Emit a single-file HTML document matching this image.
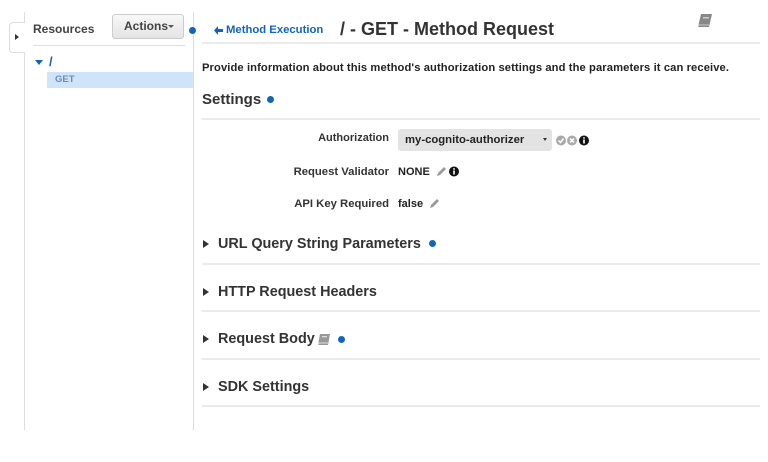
<!DOCTYPE html>
<html><head><meta charset="utf-8"><style>
*{margin:0;padding:0;box-sizing:border-box}
body{width:768px;height:462px;background:#fff;font-family:"Liberation Sans",sans-serif;color:#333;position:relative;overflow:hidden}
.a{position:absolute;white-space:nowrap}
.b{font-weight:bold}
.hl{position:absolute;height:2px;background:#eaeaea}
.dot{position:absolute;width:7px;height:7px;border-radius:50%;background:#1166bb}
.tri{position:absolute;width:0;height:0;border-top:4.5px solid transparent;border-bottom:4.5px solid transparent;border-left:6px solid #333}
.sec{font-size:14.4px;font-weight:bold;color:#333}
.lbl{font-size:11px;font-weight:bold;text-align:right;width:200px}
</style></head><body>
<div class="a" style="left:24px;top:12px;width:1px;height:418px;background:#ddd"></div>
<div class="a" style="left:193px;top:12px;width:1px;height:418px;background:#ddd"></div>
<div class="a" style="left:9px;top:22px;width:16px;height:31px;border:1px solid #ddd;border-right:none;border-radius:4px 0 0 4px;background:#fff"></div>
<div class="tri" style="left:15px;top:34px;border-left-width:4px;border-top-width:3.5px;border-bottom-width:3.5px"></div>
<div class="a b" style="left:33px;top:22px;font-size:12px;color:#444">Resources</div>
<div class="a" style="left:112px;top:14px;width:72px;height:25px;border:1px solid #ccc;border-radius:3px;background:linear-gradient(#f8f8f8,#e4e4e4)"></div>
<div class="a b" style="left:124px;top:19px;font-size:12px;color:#444">Actions</div>
<div class="a" style="left:168px;top:25px;border-left:3px solid transparent;border-right:3px solid transparent;border-top:3px solid #555"></div>
<div class="dot" style="left:189px;top:27px"></div>
<div class="hl" style="left:33px;top:45px;width:152px;height:1px;background:#ddd"></div>
<div class="a" style="left:35px;top:60px;border-left:4px solid transparent;border-right:4px solid transparent;border-top:5px solid #1166bb"></div>
<div class="a b" style="left:49px;top:54px;font-size:13px;color:#1166bb">/</div>
<div class="a" style="left:47px;top:72px;width:146px;height:16px;background:#cfe4f9"></div>
<div class="a b" style="left:55px;top:74px;font-size:9.5px;color:#6a8fb3">GET</div>

<svg class="a" style="left:213px;top:25px" width="11" height="11" viewBox="0 0 11 11"><path d="M5 1L1 5.5L5 10V7H10V4H5Z" fill="#1166bb"/></svg>
<div class="a b" style="left:226px;top:24px;font-size:11.3px;color:#1166bb">Method Execution</div>
<div class="a b" style="left:340px;top:19px;font-size:18px;color:#333">/ - GET - Method Request</div>
<svg class="a" style="left:697px;top:13px" width="17" height="16" viewBox="0 0 17 16"><path d="M4 1H15L12 14H1Z" fill="#888"/><path d="M1 14L2 12H12" stroke="#ccc" fill="none"/><rect x="6" y="4" width="6" height="1.5" fill="#ccc"/></svg>
<div class="hl" style="left:202px;top:42px;width:558px"></div>
<div class="a b" style="left:202px;top:62px;font-size:11.2px;letter-spacing:0.1px;color:#222">Provide information about this method's authorization settings and the parameters it can receive.</div>
<div class="a b" style="left:202px;top:91px;font-size:15px;color:#333">Settings</div>
<div class="dot" style="left:267px;top:96px"></div>
<div class="hl" style="left:202px;top:118px;width:558px"></div>

<div class="a lbl" style="left:189px;top:132px">Authorization</div>
<div class="a" style="left:398px;top:129px;width:154px;height:22px;background:#e3e3e3;border-radius:3px"></div>
<div class="a b" style="left:405px;top:134px;font-size:11.3px;color:#222">my-cognito-authorizer</div>
<div class="a" style="left:543px;top:138px;border-left:2.5px solid transparent;border-right:2.5px solid transparent;border-top:3.5px solid #333"></div>
<svg class="a" style="left:556px;top:135px" width="36" height="11" viewBox="0 0 36 11"><circle cx="5" cy="5.5" r="5" fill="#aaa"/><path d="M2.5 5.5L4.5 7.5L7.5 3.5" stroke="#fff" stroke-width="1.5" fill="none"/><circle cx="16" cy="5.5" r="5" fill="#aaa"/><path d="M14 3.5L18 7.5M18 3.5L14 7.5" stroke="#fff" stroke-width="1.5"/><circle cx="28" cy="5.5" r="5" fill="#111"/><rect x="27.2" y="4.5" width="1.6" height="4" fill="#fff"/><rect x="27.2" y="2.2" width="1.6" height="1.5" fill="#fff"/></svg>
<div class="a lbl" style="left:189px;top:166px;font-size:11.3px">Request Validator</div>
<div class="a b" style="left:398px;top:166px;font-size:11px;color:#222">NONE</div>
<svg class="a" style="left:436px;top:166px" width="24" height="11" viewBox="0 0 24 11"><path d="M1 10L2 7L8 1L10 3L4 9Z" fill="#999"/><circle cx="18" cy="5.5" r="5" fill="#111"/><rect x="17.2" y="4.5" width="1.6" height="4" fill="#fff"/><rect x="17.2" y="2.2" width="1.6" height="1.5" fill="#fff"/></svg>
<div class="a lbl" style="left:189px;top:198px;font-size:11.3px">API Key Required</div>
<div class="a b" style="left:398px;top:198px;font-size:11px;color:#222">false</div>
<svg class="a" style="left:429px;top:198px" width="12" height="11" viewBox="0 0 12 11"><path d="M1 10L2 7L8 1L10 3L4 9Z" fill="#999"/></svg>

<div class="tri" style="left:203px;top:240px"></div>
<div class="a sec" style="left:218px;top:236px">URL Query String Parameters</div>
<div class="dot" style="left:429px;top:240px"></div>
<div class="hl" style="left:202px;top:263px;width:558px"></div>
<div class="tri" style="left:203px;top:288px"></div>
<div class="a sec" style="left:218px;top:284px">HTTP Request Headers</div>
<div class="hl" style="left:202px;top:310px;width:558px"></div>
<div class="tri" style="left:203px;top:335px"></div>
<div class="a sec" style="left:218px;top:331px">Request Body</div>
<svg class="a" style="left:317px;top:333px" width="14" height="13" viewBox="0 0 14 13"><path d="M3 1H13L11 12H1Z" fill="#999"/><path d="M1 12L2 10H11" stroke="#ddd" fill="none"/><rect x="5" y="3" width="5" height="1.3" fill="#ddd"/></svg>
<div class="dot" style="left:338px;top:336px"></div>
<div class="hl" style="left:202px;top:358px;width:558px"></div>
<div class="tri" style="left:203px;top:383px"></div>
<div class="a sec" style="left:218px;top:379px">SDK Settings</div>
<div class="hl" style="left:202px;top:405px;width:558px"></div>
</body></html>
